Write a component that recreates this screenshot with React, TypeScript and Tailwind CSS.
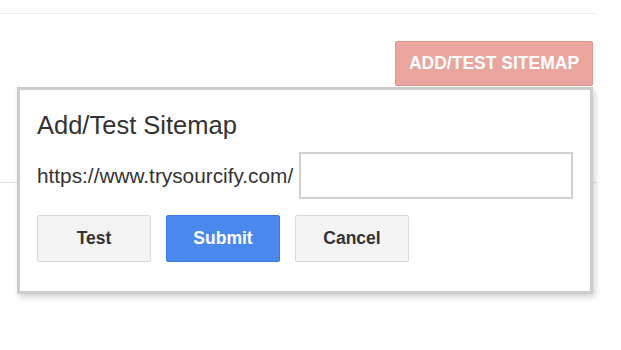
import React from 'react'

export default function App() {
  return (
    <div
      className="relative w-[621px] h-[350px] bg-white overflow-hidden"
      style={{ fontFamily: '"Liberation Sans", Arial, sans-serif' }}
    >
      {/* top divider */}
      <div className="w-[597px] h-[14px] border-b border-[#ececec]" />

      {/* toolbar */}
      <div className="w-[593px] flex justify-end mt-[27px]">
        <button className="w-[198px] h-[45px] bg-[#e9a59e] border border-[#e3938b] rounded-[2px] text-white text-[17.5px] font-bold">
          ADD/TEST SITEMAP
        </button>
      </div>

      {/* table header line behind the popover */}
      <div className="w-[597px] h-[1px] mt-[96px] bg-[#dedede]" />

      {/* popover */}
      <div className="absolute left-[17px] top-[87px] w-[576px] h-[207px] bg-white border-[3px] border-[#cccccc] shadow-[2px_3px_6px_rgba(0,0,0,0.18)] px-[17px] pt-[21px]">
        <h2 className="text-[25.5px] leading-[29px] text-[#333333]">Add/Test Sitemap</h2>

        <div className="flex items-center gap-[6px] mt-[12px]">
          <span className="text-[20.8px] leading-[24px] text-[#333333]">https://www.trysourcify.com/</span>
          <input
            type="text"
            className="w-[274px] h-[47px] border-2 border-[#d0d0d0] outline-none px-2 text-[18px]"
          />
        </div>

        <div className="flex gap-[15px] mt-[16px]">
          <button className="w-[114px] h-[47px] bg-[#f3f3f3] border border-[#d9d9d9] rounded-[2px] text-[17.5px] font-bold text-[#333333]">
            Test
          </button>
          <button className="w-[114px] h-[47px] bg-[#4a88ee] border border-[#3b7be6] rounded-[2px] text-[17.5px] font-bold text-white">
            Submit
          </button>
          <button className="w-[114px] h-[47px] bg-[#f3f3f3] border border-[#d9d9d9] rounded-[2px] text-[17.5px] font-bold text-[#333333]">
            Cancel
          </button>
        </div>
      </div>
    </div>
  )
}
